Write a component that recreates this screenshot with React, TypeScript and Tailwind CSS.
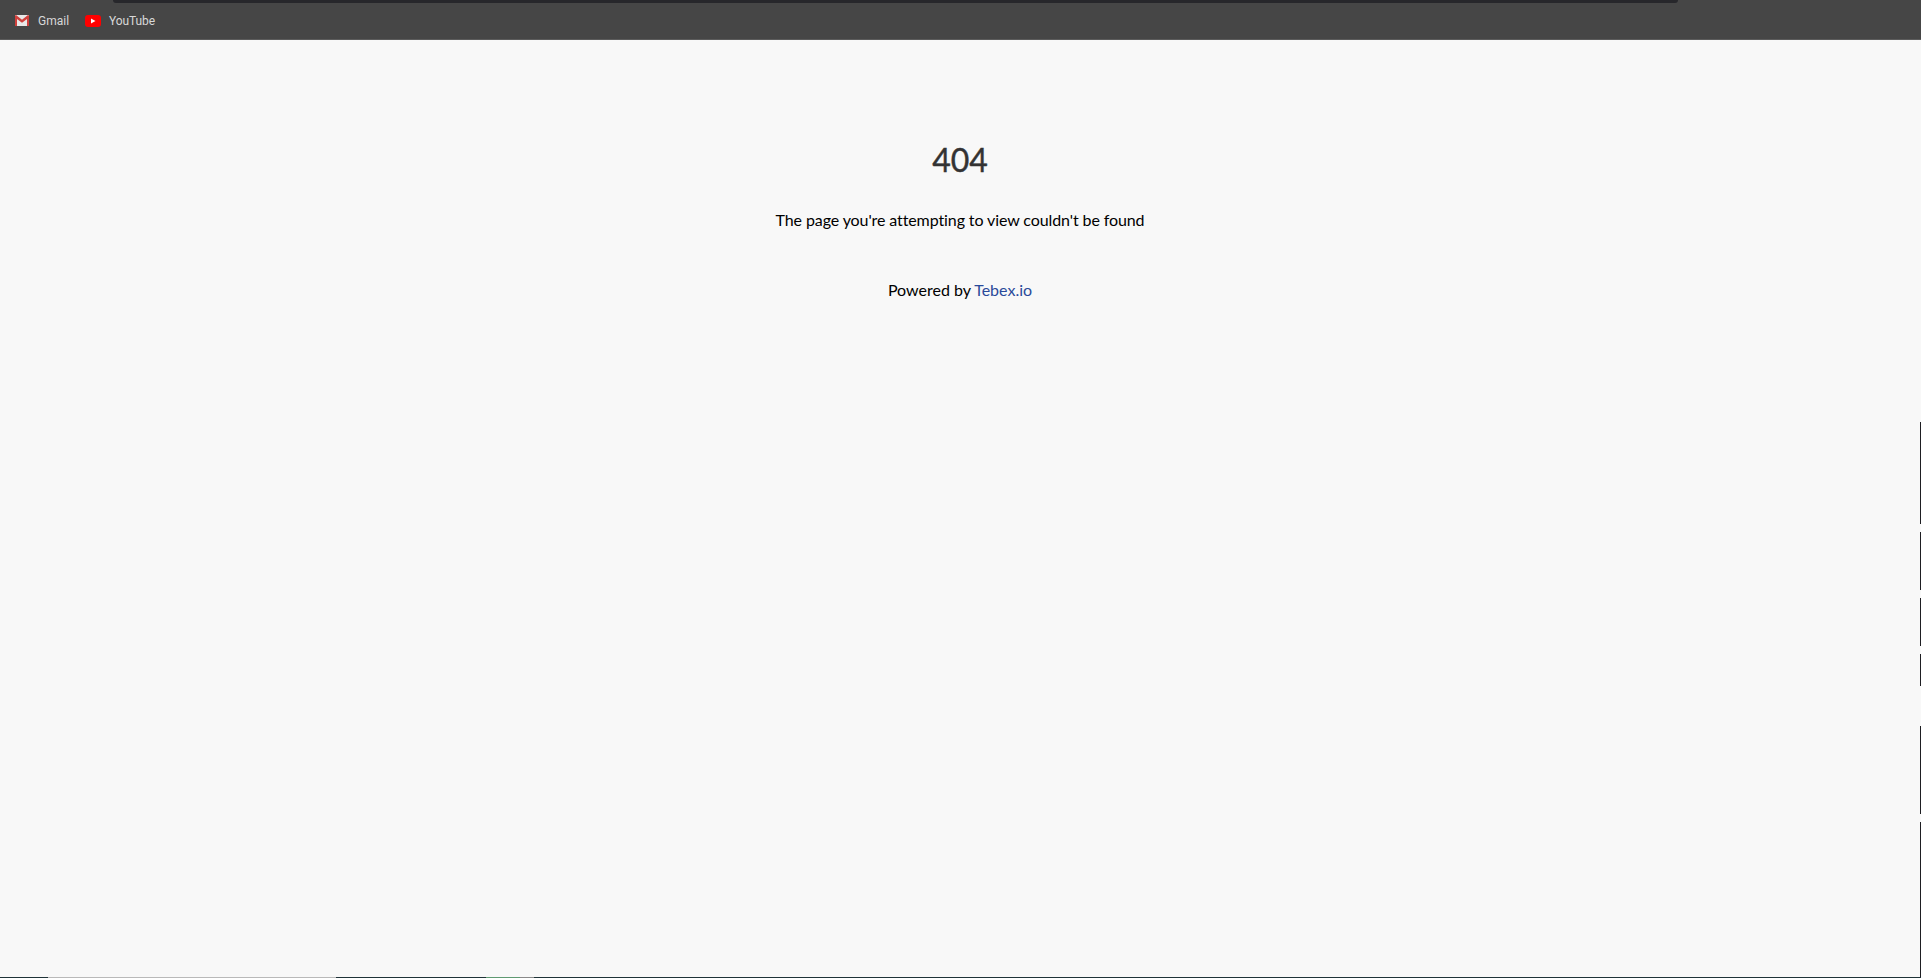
const BOTTOM = [
  { w: 48, c: "bg-[#1f3338]" },
  { w: 288, c: "bg-[#b9b9b9]" },
  { w: 150, c: "bg-[#1f3338]" },
  { w: 34, c: "bg-[#5f9a72]" },
  { w: 14, c: "bg-[#8a8a8a]" },
];

const EDGE = [
  { h: 102, dark: true },
  { h: 8, dark: false },
  { h: 58, dark: true },
  { h: 8, dark: false },
  { h: 48, dark: true },
  { h: 8, dark: false },
  { h: 32, dark: true },
  { h: 40, dark: false },
  { h: 88, dark: true },
  { h: 8, dark: false },
  { h: 155, dark: true },
];

function GmailIcon() {
  return (
    <svg width="14" height="11" viewBox="0 0 14 11">
      <rect x="0" y="0" width="14" height="11" fill="#e8e8e8" />
      <path d="M0 0.500V11h2V4l5 3.800L12 4v7h2V0.500L13 0 7 4.800 1 0z" fill="#d0403c" />
    </svg>
  );
}

function YoutubeIcon() {
  return (
    <svg width="16" height="12" viewBox="0 0 16 12">
      <rect x="0" y="0" width="16" height="12" rx="3" fill="#ff0000" />
      <path d="M6 3.500v5l4.500-2.500z" fill="#ffffff" />
    </svg>
  );
}

export default function App() {
  return (
    <div className="flex h-[978px] flex-col overflow-hidden bg-[#f8f8f8] font-['Lato','Liberation_Sans',sans-serif]">
      {/* Bookmarks bar */}
      <div className="relative flex h-[40px] items-center border-b border-[#5c5c5c] bg-[#464646] pt-[2px] font-['Roboto','Liberation_Sans',sans-serif] text-[12px] text-[#d8d8d8]">
        <div className="absolute left-[113px] top-0 h-[3px] w-[1565px] rounded-b-[6px] bg-[#27272b]" />
        <div className="ml-[15px] flex items-center gap-[9px]">
          <GmailIcon />
          <span>Gmail</span>
        </div>
        <div className="ml-[16px] flex items-center gap-[8px]">
          <YoutubeIcon />
          <span className="tracking-[-0.1px]">YouTube</span>
        </div>
      </div>

      <div className="flex flex-1">
        <main className="flex flex-1 flex-col items-center pt-[97px]">
          <h1 className="text-[32px] leading-[46px] font-normal text-[#333333] [-webkit-text-stroke:0.4px_#333333]">404</h1>
          <p className="mt-[25px] text-[16px] leading-[24px] tracking-[-0.1px] text-black">The page you're attempting to view couldn't be found</p>
          <p className="mt-[46px] text-[16px] leading-[24px] text-black">
            Powered by <a className="text-[#2a4a9a]">Tebex.io</a>
          </p>
        </main>
        {/* Edge of the window behind */}
        <div className="flex w-[1px] flex-col pt-[382px]">
          {EDGE.map((s, i) => (
            <div key={i} className={s.dark ? "bg-[#1e1e22]" : "bg-[#f8f8f8]"} style={{ height: s.h }} />
          ))}
        </div>
      </div>

      <div className="flex h-[1px] bg-[#1f3338]">
        {BOTTOM.map((s, i) => (
          <div key={i} className={s.c} style={{ width: s.w }} />
        ))}
      </div>
    </div>
  );
}
